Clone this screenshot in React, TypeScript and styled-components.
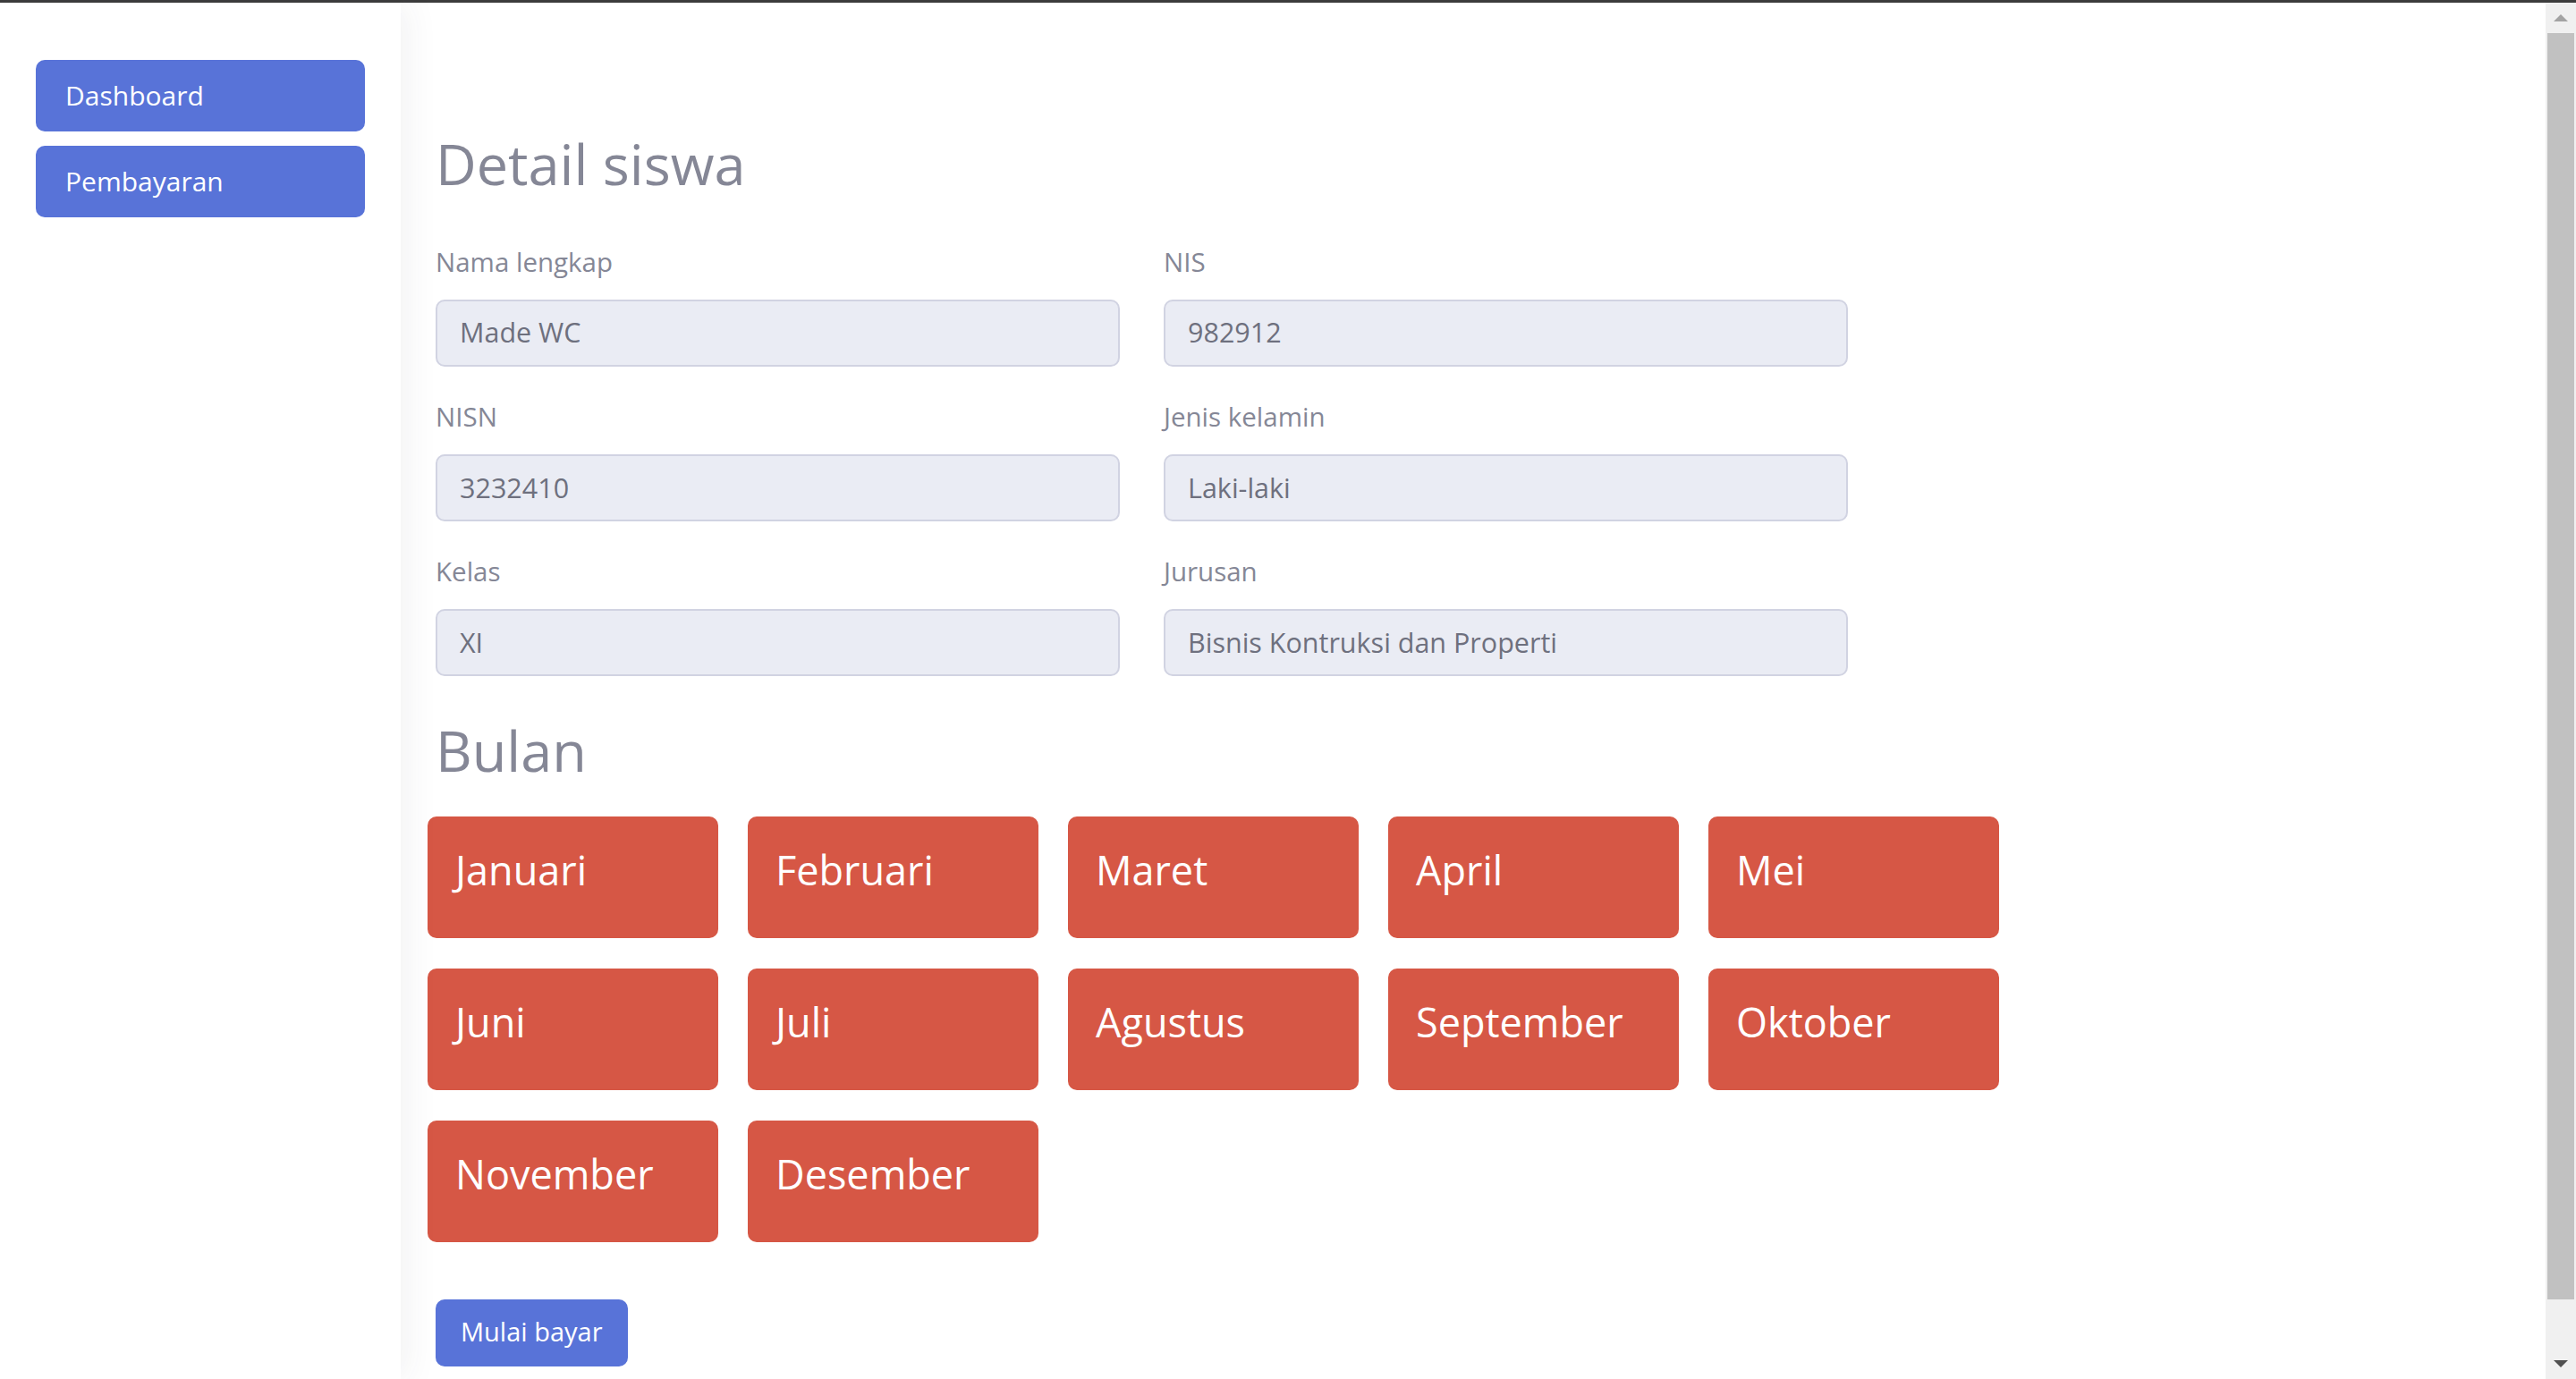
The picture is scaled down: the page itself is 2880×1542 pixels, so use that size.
import React from "react"
import styled, { createGlobalStyle } from "styled-components"

const GlobalStyle = createGlobalStyle`
  html, body {
    margin: 0;
    padding: 0;
    height: 100%;
    overflow: hidden;
    background: #fff;
  }
  body {
    font-family: "Open Sans", "Noto Sans", sans-serif;
  }
  * {
    box-sizing: border-box;
  }
`

const Frame = styled.div`
  display: flex;
  flex-direction: column;
  height: 100vh;
`

const TopLine = styled.div`
  height: 3px;
  background: #3c3c3c;
  flex-shrink: 0;
`

const Body = styled.div`
  flex: 1;
  display: flex;
  min-height: 0;
`

const Sidebar = styled.aside`
  width: 448px;
  flex-shrink: 0;
  display: flex;
  flex-direction: column;
  gap: 16px;
  padding: 64px 40px 0;
  background: #fff;
  position: relative;
  z-index: 1;
  box-shadow: 6px 0 36px rgba(58, 59, 69, 0.07);
`

const NavButton = styled.a`
  display: flex;
  align-items: center;
  height: 80px;
  padding: 0 33px 2px;
  border-radius: 10px;
  background: #5873d8;
  color: #fff;
  font-size: 30px;
  text-decoration: none;
`

const Main = styled.main`
  flex: 1;
  padding: 142px 0 0 39px;
  overflow: hidden;
`

const Heading = styled.h2<{ gapBelow: number }>`
  margin: 0 0 ${(p) => p.gapBelow}px;
  font-size: 63px;
  font-weight: 400;
  line-height: 1.2;
  color: #858796;
`

const FieldGrid = styled.div`
  display: grid;
  grid-template-columns: 765px 765px;
  column-gap: 49px;
  margin-bottom: 11px;
`

const Field = styled.div`
  margin-bottom: 34px;
`

const Label = styled.label`
  display: block;
  font-size: 29.5px;
  line-height: 1.5;
  color: #858796;
  margin-bottom: 20px;
`

const Input = styled.input`
  display: block;
  width: 100%;
  height: 75px;
  padding: 0 25px 2px;
  border: 2px solid #d1d3e2;
  border-radius: 10px;
  background: #eaecf4;
  color: #6e707e;
  font-family: inherit;
  font-size: 30.5px;
  outline: none;
`

const MonthGrid = styled.div`
  display: grid;
  grid-template-columns: repeat(5, 325px);
  column-gap: 33px;
  row-gap: 34px;
  margin-left: -9px;
`

const MonthCard = styled.div`
  height: 136px;
  padding: 33px 31px 0;
  border-radius: 10px;
  background: #d65745;
  color: #fff;
  font-size: 45px;
  line-height: 1.2;
`

const PayButton = styled.button`
  margin-top: 64px;
  height: 75px;
  padding: 0 28px 3px;
  border: none;
  border-radius: 10px;
  background: #5873d8;
  color: #fff;
  font-family: inherit;
  font-size: 29px;
`

const ScrollTrack = styled.div`
  width: 34px;
  flex-shrink: 0;
  display: flex;
  flex-direction: column;
  background: #f0f0f0;
`

const ArrowBox = styled.div`
  height: 34px;
  display: flex;
  align-items: center;
  justify-content: center;
  flex-shrink: 0;
`

const ThumbArea = styled.div`
  flex: 1;
  padding: 0 2px 55px;
  display: flex;
`

const Thumb = styled.div`
  flex: 1;
  background: #c1c1c1;
`

const fields = [
  ["Nama lengkap", "Made WC"],
  ["NIS", "982912"],
  ["NISN", "3232410"],
  ["Jenis kelamin", "Laki-laki"],
  ["Kelas", "XI"],
  ["Jurusan", "Bisnis Kontruksi dan Properti"],
]

const months = [
  "Januari",
  "Februari",
  "Maret",
  "April",
  "Mei",
  "Juni",
  "Juli",
  "Agustus",
  "September",
  "Oktober",
  "November",
  "Desember",
]

const App: React.FC = () => {
  return (
    <Frame>
      <GlobalStyle />
      <TopLine />
      <Body>
        <Sidebar>
          <NavButton href="#">Dashboard</NavButton>
          <NavButton href="#">Pembayaran</NavButton>
        </Sidebar>
        <Main>
          <Heading gapBelow={50}>Detail siswa</Heading>
          <FieldGrid>
            {fields.map(([label, value]) => (
              <Field key={label}>
                <Label>{label}</Label>
                <Input value={value} readOnly disabled />
              </Field>
            ))}
          </FieldGrid>
          <Heading gapBelow={36}>Bulan</Heading>
          <MonthGrid>
            {months.map((m) => (
              <MonthCard key={m}>{m}</MonthCard>
            ))}
          </MonthGrid>
          <PayButton>Mulai bayar</PayButton>
        </Main>
        <ScrollTrack>
          <ArrowBox>
            <svg width="16" height="8" viewBox="0 0 16 8">
              <polygon points="8,0 16,8 0,8" fill="#a3a3a3" />
            </svg>
          </ArrowBox>
          <ThumbArea>
            <Thumb />
          </ThumbArea>
          <ArrowBox>
            <svg width="16" height="8" viewBox="0 0 16 8">
              <polygon points="0,0 16,0 8,8" fill="#505050" />
            </svg>
          </ArrowBox>
        </ScrollTrack>
      </Body>
    </Frame>
  )
}

export default App
